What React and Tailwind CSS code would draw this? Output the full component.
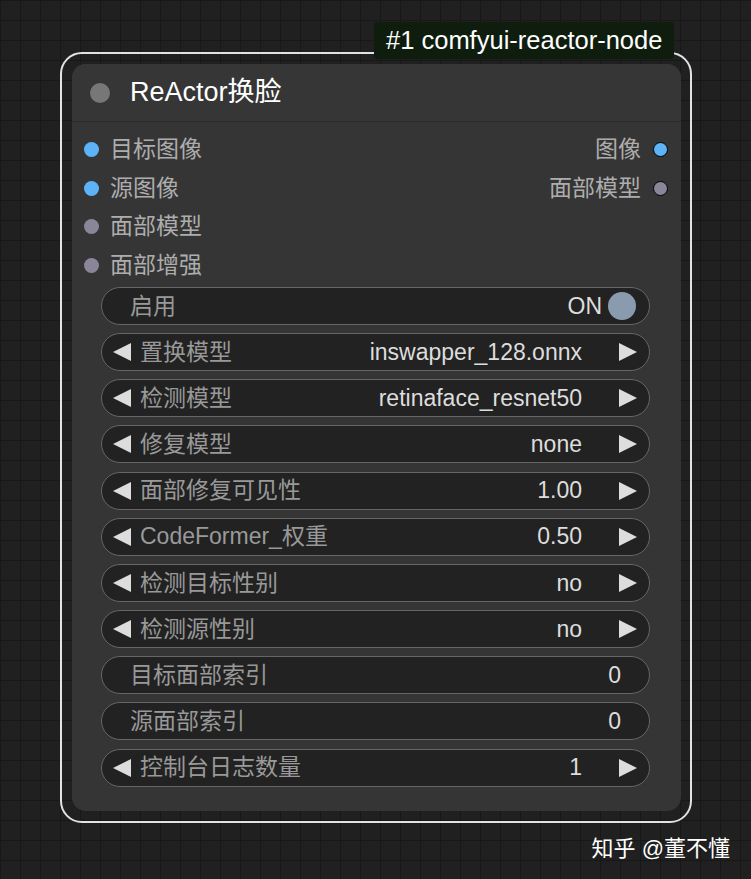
import React from 'react';

const font = { fontFamily: '"Liberation Sans", "Noto Sans CJK SC", sans-serif' };

function LeftArrow() {
  return (
    <svg width="20" height="20" viewBox="0 0 20 20" className="shrink-0">
      <polygon points="19,1 19,19 1,10" fill="#dddddd" />
    </svg>
  );
}

function RightArrow() {
  return (
    <svg width="20" height="20" viewBox="0 0 20 20" className="shrink-0">
      <polygon points="1,1 1,19 19,10" fill="#dddddd" />
    </svg>
  );
}

function ComboWidget({ label, value }) {
  return (
    <div className="flex items-center h-[38px] rounded-full bg-[#222] border-[1.5px] border-[#666] pl-[10px] pr-[11px]">
      <LeftArrow />
      <span className="ml-[8px] text-[#999] truncate">{label}</span>
      <span className="ml-auto text-[#ddd]">{value}</span>
      <span className="ml-[36px]"><RightArrow /></span>
    </div>
  );
}

function NumberWidget({ label, value }) {
  return (
    <div className="flex items-center h-[38px] rounded-full bg-[#222] border-[1.5px] border-[#666] pl-[28px] pr-[28px]">
      <span className="text-[#999]">{label}</span>
      <span className="ml-auto text-[#ddd]">{value}</span>
    </div>
  );
}

function ToggleWidget({ label }) {
  return (
    <div className="flex items-center h-[38px] rounded-full bg-[#222] border-[1.5px] border-[#666] pl-[28px] pr-[13px]">
      <span className="text-[#999]">{label}</span>
      <span className="ml-auto text-[#ddd]">ON</span>
      <span className="ml-[6px] w-[28px] h-[28px] rounded-full bg-[#8a9bb0]" />
    </div>
  );
}

const inputs = [
  { label: '目标图像', color: 'bg-[#5cb3f7]' },
  { label: '源图像', color: 'bg-[#5cb3f7]' },
  { label: '面部模型', color: 'bg-[#8a8599]' },
  { label: '面部增强', color: 'bg-[#8a8599]' },
];

const outputs = [
  { label: '图像', color: 'bg-[#5cb3f7]' },
  { label: '面部模型', color: 'bg-[#8a8599]' },
];

export default function App() {
  return (
    <div
      style={font}
      className="w-[751px] h-[879px] overflow-hidden bg-[#202020] bg-[linear-gradient(#181818_1px,transparent_1px),linear-gradient(90deg,#181818_1px,transparent_1px)] bg-size-[20px_20px] pt-[52px] pl-[60px]"
    >
      <div className="relative w-[632px] h-[771px] rounded-[22px] border-2 border-[#e2e2e2] p-[10px] pr-[9px]">
        <div className="absolute left-[312px] top-[-32px] h-[37px] px-[12px] flex items-center bg-[#0f1d0e] rounded-[4px] text-white text-[25.5px] leading-none">
          #1 comfyui-reactor-node
        </div>

        <div className="h-full rounded-[14px] bg-[#353535] overflow-hidden flex flex-col">
          <div className="h-[58px] shrink-0 flex items-center pl-[18px] border-b border-[#2b2b2b] bg-[#363636]">
            <span className="w-[20px] h-[20px] rounded-full bg-[#777]" />
            <span className="ml-[20px] text-[27px] text-white">ReActor换脸</span>
          </div>

          <div className="pt-[8px] text-[23px] flex">
            <div className="flex-1 flex flex-col">
              {inputs.map((s) => (
                <div key={s.label} className="h-[38.7px] flex items-center pl-[12px]">
                  <span className={`w-[15px] h-[15px] rounded-full ${s.color}`} />
                  <span className="ml-[11px] text-[#adadad]">{s.label}</span>
                </div>
              ))}
            </div>
            <div className="flex flex-col">
              {outputs.map((s) => (
                <div key={s.label} className="h-[38.7px] flex items-center justify-end pr-[13px]">
                  <span className="text-[#adadad]">{s.label}</span>
                  <span className={`ml-[12px] w-[15px] h-[15px] rounded-full border-[1.5px] border-black ${s.color}`} />
                </div>
              ))}
            </div>
          </div>

          <div className="mt-[2px] ml-[29px] mr-[31px] flex flex-col gap-[8.2px] text-[23px]">
            <ToggleWidget label="启用" />
            <ComboWidget label="置换模型" value="inswapper_128.onnx" />
            <ComboWidget label="检测模型" value="retinaface_resnet50" />
            <ComboWidget label="修复模型" value="none" />
            <ComboWidget label="面部修复可见性" value="1.00" />
            <ComboWidget label="CodeFormer_权重" value="0.50" />
            <ComboWidget label="检测目标性别" value="no" />
            <ComboWidget label="检测源性别" value="no" />
            <NumberWidget label="目标面部索引" value="0" />
            <NumberWidget label="源面部索引" value="0" />
            <ComboWidget label="控制台日志数量" value="1" />
          </div>
        </div>
      </div>

      <div className="w-[670px] mt-[9px] text-right text-white text-[22px]">知乎 @董不懂</div>
    </div>
  );
}
